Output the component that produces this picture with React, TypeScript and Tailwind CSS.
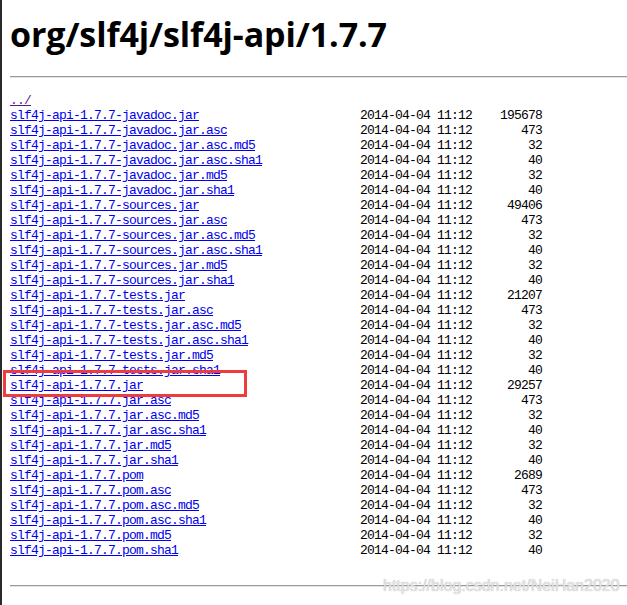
import React from 'react';

const base = 'slf4j-api-1.7.7';
const date = '2014-04-04 11:12';

// name suffix, size
const files: [string, string][] = [
  ['-javadoc.jar', '195678'],
  ['-javadoc.jar.asc', '473'],
  ['-javadoc.jar.asc.md5', '32'],
  ['-javadoc.jar.asc.sha1', '40'],
  ['-javadoc.jar.md5', '32'],
  ['-javadoc.jar.sha1', '40'],
  ['-sources.jar', '49406'],
  ['-sources.jar.asc', '473'],
  ['-sources.jar.asc.md5', '32'],
  ['-sources.jar.asc.sha1', '40'],
  ['-sources.jar.md5', '32'],
  ['-sources.jar.sha1', '40'],
  ['-tests.jar', '21207'],
  ['-tests.jar.asc', '473'],
  ['-tests.jar.asc.md5', '32'],
  ['-tests.jar.asc.sha1', '40'],
  ['-tests.jar.md5', '32'],
  ['-tests.jar.sha1', '40'],
  ['.jar', '29257'],
  ['.jar.asc', '473'],
  ['.jar.asc.md5', '32'],
  ['.jar.asc.sha1', '40'],
  ['.jar.md5', '32'],
  ['.jar.sha1', '40'],
  ['.pom', '2689'],
  ['.pom.asc', '473'],
  ['.pom.asc.md5', '32'],
  ['.pom.asc.sha1', '40'],
  ['.pom.md5', '32'],
  ['.pom.sha1', '40'],
];

function Rule() {
  return <div className="h-0 border-t border-b border-t-[#9a9a9a] border-b-[#e4e4e4]" />;
}

export default function App() {
  return (
    <div className="relative min-h-[605px] w-[627px] bg-white border-l-2 border-[#2a2a2a] pl-2 overflow-hidden flex flex-col">
      {/* window edge bits */}
      <div className="absolute left-[-2px] top-[18px] h-[9px] w-[2px] bg-[#d98a2b]" />
      <div className="absolute left-[-2px] top-[64px] h-[9px] w-[2px] bg-[#d98a2b]" />

      <h1 className="pt-[14px] text-[34px] leading-[40px] font-bold text-black tracking-[-0.1px] [font-family:'Open_Sans','Noto_Sans',sans-serif]">
        org/slf4j/slf4j-api/1.7.7
      </h1>

      <div className="mt-[22px]">
        <Rule />
      </div>

      <pre className="mt-[15px] text-[13px] leading-[15px] tracking-[-0.8px] text-black [font-family:'Liberation_Mono',monospace]">
        <a href="#" className="text-[#551a8b] underline">../</a>
        {'\n'}
        {files.map(([suffix, size]) => {
          const name = base + suffix;
          return (
            <React.Fragment key={name}>
              <a href="#" className="text-[#0000ee] underline">{name}</a>
              {' '.repeat(50 - name.length) + date + size.padStart(10) + '\n'}
            </React.Fragment>
          );
        })}
      </pre>

      <div className="mt-[27px]">
        <Rule />
      </div>

      {/* highlight box */}
      <div className="absolute left-[1px] top-[370px] w-[244px] h-[27px] border-[3px] border-[#ee3b3b]" />

      {/* watermark */}
      <div className="absolute left-[381px] top-[576px] text-[16px] leading-[20px] text-[#e6e6e6] [text-shadow:0_0_1px_#a8a8a8] [font-family:'Liberation_Sans',sans-serif]">
        https://blog.csdn.net/NeiHan2020
      </div>
    </div>
  );
}
